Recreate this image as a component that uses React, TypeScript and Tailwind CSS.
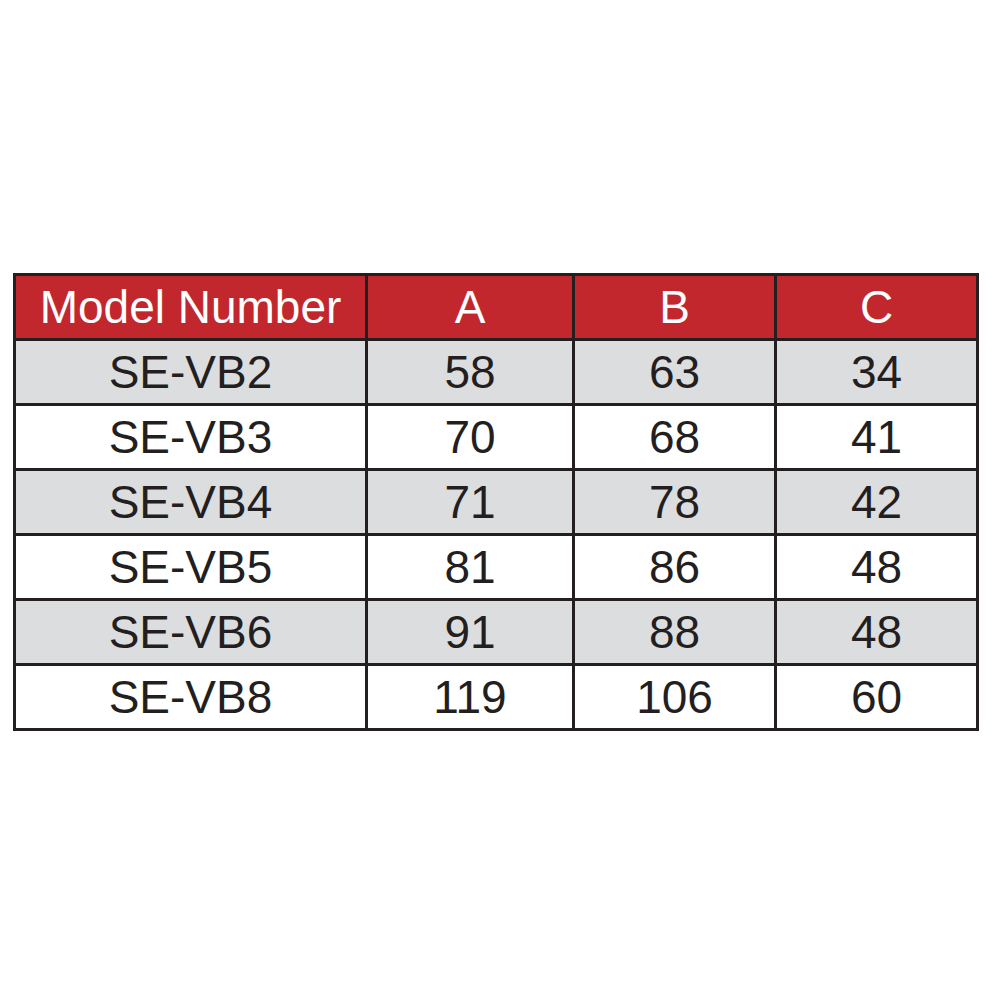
const HEADERS = ['Model Number', 'A', 'B', 'C']

const ROWS: [string, number, number, number][] = [
  ['SE-VB2', 58, 63, 34],
  ['SE-VB3', 70, 68, 41],
  ['SE-VB4', 71, 78, 42],
  ['SE-VB5', 81, 86, 48],
  ['SE-VB6', 91, 88, 48],
  ['SE-VB8', 119, 106, 60],
]

export default function App() {
  return (
    <div className="min-h-[1000px] w-[1000px] bg-white pl-[13px] pt-[273px] font-['Liberation_Sans',Arial,sans-serif]">
      <div className="grid w-fit grid-cols-[349px_204px_199px_199px] gap-[3px] bg-[#231f20] p-[3px]">
        {HEADERS.map((h) => (
          <div key={h} className="flex h-[62px] items-center justify-center bg-[#c1272d] text-[46px] leading-none text-white">
            {h}
          </div>
        ))}
        {ROWS.map((row, i) =>
          row.map((cell, j) => (
            <div
              key={`${i}-${j}`}
              className={`flex h-[62px] items-center justify-center text-[46px] leading-none text-[#231f20] ${i % 2 === 0 ? 'bg-[#dcdddf]' : 'bg-white'}`}
            >
              {cell}
            </div>
          )),
        )}
      </div>
    </div>
  )
}
